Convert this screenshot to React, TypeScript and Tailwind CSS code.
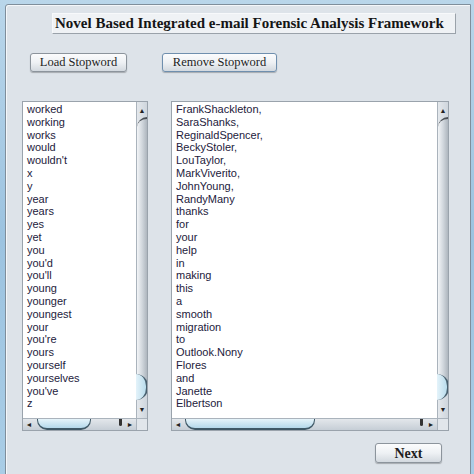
import React from "react";

const leftWords = [
  "worked","working","works","would","wouldn't","x","y","year","years","yes","yet","you","you'd","you'll","young","younger","youngest","your","you're","yours","yourself","yourselves","you've","z",
];
const rightWords = [
  "FrankShackleton,","SaraShanks,","ReginaldSpencer,","BeckyStoler,","LouTaylor,","MarkViverito,","JohnYoung,","RandyMany","thanks","for","your","help","in","making","this","a","smooth","migration","to","Outlook.Nony","Flores","and","Janette","Elbertson",
];

function VScroll() {
  return (
    <div className="flex h-full w-[11px] flex-col border-l border-[#aab3bc] bg-gradient-to-r from-[#e4e8ec] to-[#cfd6dd]">
      <div className="flex h-[13px] items-end justify-center pb-[1px] text-[7px] leading-none text-[#222]">▲</div>
      <div className="relative mt-[2px] flex-1">
        <div className="absolute inset-x-0 top-0 bottom-[14px] rounded-tl-[10px] border-t-2 border-[#4a4f55] bg-gradient-to-r from-[#f3f5f7] via-[#d2d8de] to-[#aeb6be]" />
        <div className="absolute bottom-[6px] left-[-1px] right-[-1px] h-[26px] rounded-r-full border-r-2 border-[#49606f] bg-gradient-to-r from-[#e4f3fa] to-[#b9dcec]" />
      </div>
      <div className="flex h-[12px] items-start justify-center text-[7px] leading-none text-[#222]">▼</div>
    </div>
  );
}

function HScroll({ thumbStart, thumbW }: { thumbStart: string; thumbW: string }) {
  return (
    <div className="flex h-[12px] border-t border-[#aab3bc]">
      <div className="flex flex-1 bg-gradient-to-b from-[#e3e7eb] to-[#c6ced6]">
        <div className="flex w-[12px] items-center justify-center text-[7px] leading-none text-[#222]">◄</div>
        <div className={`${thumbStart} h-[11px] ${thumbW} rounded-b-[10px] border-b-2 border-x border-[#3f5866] bg-gradient-to-b from-[#e6f4fa] to-[#b4d8ea]`} />
        <div className="flex-1" />
        <div className="mr-[2px] h-[7px] w-[3px] rounded-b-sm bg-[#333]" />
        <div className="flex w-[12px] items-center justify-center text-[7px] leading-none text-[#222]">►</div>
      </div>
      <div className="w-[11px] border-l border-[#aab3bc] bg-[#e1e6eb]" />
    </div>
  );
}

function ListBox({ words, width, thumbStart, thumbW }: { words: string[]; width: string; thumbStart: string; thumbW: string }) {
  return (
    <div className={`flex h-[330px] ${width} flex-col border border-[#9aa3ac] bg-white`}>
      <div className="flex flex-1 overflow-hidden">
        <div className="flex-1 overflow-hidden pl-[4px] pt-[1px]">
          {words.map((w) => (
            <div key={w} className="h-[12.8px] text-[11px] leading-[12.8px] whitespace-nowrap text-[#23213c]" style={{ fontFamily: '"Liberation Sans", Arial, sans-serif' }}>
              {w}
            </div>
          ))}
        </div>
        <VScroll />
      </div>
      <HScroll thumbStart={thumbStart} thumbW={thumbW} />
    </div>
  );
}

function Btn({ children, w, focus, bold }: { children: React.ReactNode; w: string; focus?: boolean; bold?: boolean }) {
  return (
    <div
      className={`flex h-[19px] ${w} items-center justify-center rounded-[3px] border ${focus ? "border-[#6f8fae]" : "border-[#8c949c]"} bg-gradient-to-b from-[#fbfcfd] via-[#eef1f4] to-[#d3d9df] text-[#1d1d1d] shadow-[0_1px_1px_rgba(0,0,0,0.25)] ${bold ? "font-bold text-[14px]" : "text-[12.5px]"}`}
      style={{ fontFamily: '"Liberation Serif", "Times New Roman", serif' }}
    >
      {children}
    </div>
  );
}

export default function App() {
  return (
    <div className="flex h-[474px] w-[474px] overflow-hidden bg-gradient-to-b from-[#b9d6ea] via-[#9cc3e0] to-[#a9cde6] pl-[5px] pt-[4px]">
      <div className="flex h-[474px] w-[466px] flex-col rounded-tl-[3px] border border-[#7f8e9b] bg-[#dde3e9] shadow-[inset_1px_1px_0_#f4f7fa]">
        <div className="ml-[46px] mt-[8px] flex h-[21px] w-[404px] items-center border border-b-[#9aa2aa] border-r-[#9aa2aa] border-l-[#f7f9fb] border-t-[#f7f9fb] bg-[#eff2f5] pl-[2px]">
          <span className="text-[15px] font-bold whitespace-nowrap text-[#151515]" style={{ fontFamily: '"Liberation Serif", "Times New Roman", serif' }}>
            Novel Based Integrated e-mail Forensic Analysis Framework
          </span>
        </div>
        <div className="ml-[24px] mt-[19px] flex gap-[35px]">
          <Btn w="w-[97px]">Load Stopword</Btn>
          <Btn w="w-[115px]" focus>Remove Stopword</Btn>
        </div>
        <div className="ml-[16px] mt-[29px] flex gap-[23px]">
          <ListBox words={leftWords} width="w-[126px]" thumbStart="ml-[2px]" thumbW="w-[54px]" />
          <ListBox words={rightWords} width="w-[278px]" thumbStart="ml-[1px]" thumbW="w-[130px]" />
        </div>
        <div className="ml-[369px] mt-[12px]">
          <Btn w="w-[67px] h-[20px]" bold>Next</Btn>
        </div>
      </div>
    </div>
  );
}
